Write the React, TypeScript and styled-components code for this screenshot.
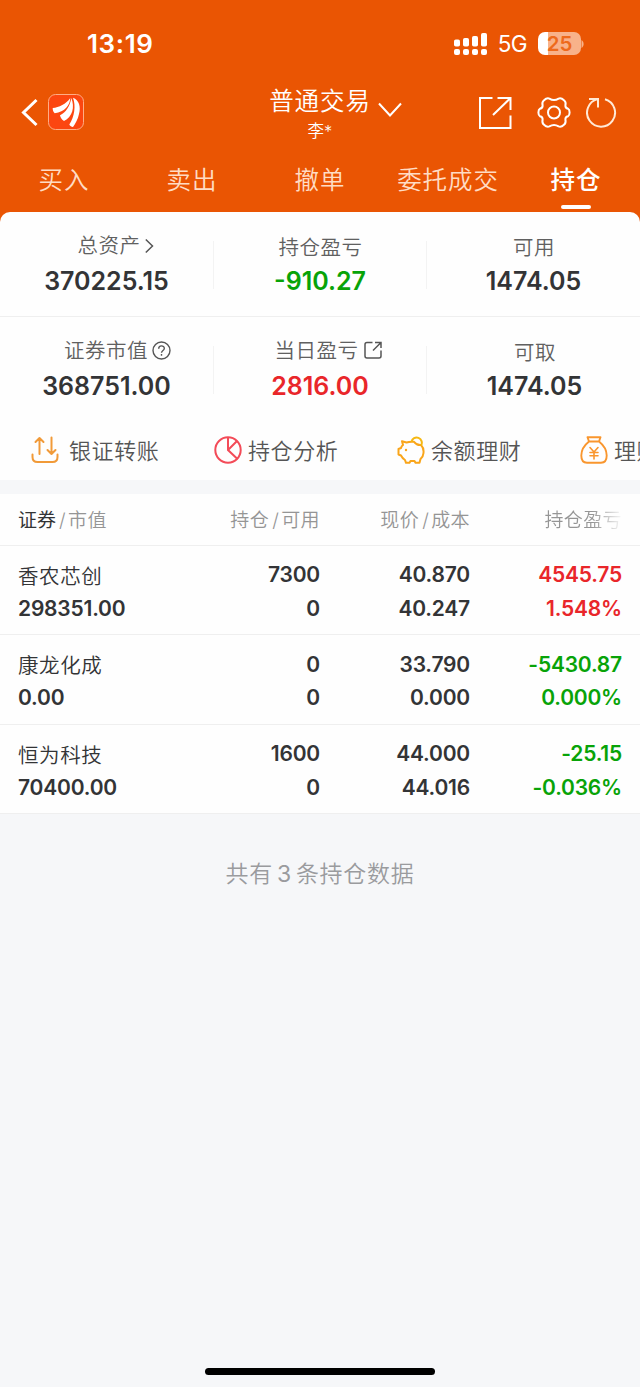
import React from "react";
import styled, { createGlobalStyle } from "styled-components";

const ORANGE = "#ea5503";
const RED = "#e9262a";
const GREEN = "#08a308";
const INK = "#333436";

const GlobalStyle = createGlobalStyle`
  *, *::before, *::after { box-sizing: border-box; }
  body {
    margin: 0;
    background: #f6f7f9;
    font-family: Inter, "Noto Sans CJK SC", sans-serif;
    color: ${INK};
    overflow: hidden;
  }
`;

const Screen = styled.div`
  width: 640px;
  height: 1387px;
  display: flex;
  flex-direction: column;
  background: #f6f7f9;
  overflow: hidden;
`;

const Header = styled.header`
  height: 222px;
  margin-bottom: -10px;
  flex: none;
  background: ${ORANGE};
  color: #fff;
`;

const StatusBar = styled.div`
  height: 88px;
  padding: 0 56px 0 87px;
  display: flex;
  align-items: center;
  justify-content: space-between;
`;

const Clock = styled.span`
  font-size: 26px;
  font-weight: 600;
  line-height: 30px;
  letter-spacing: 0.6px;
`;

const StatusIcons = styled.div`
  display: flex;
  align-items: center;
`;

const Network = styled.span`
  margin: 0 11px 0 10px;
  font-size: 22.5px;
  line-height: 26px;
  letter-spacing: -0.6px;
`;

const Battery = styled.div`
  width: 43px;
  height: 23px;
  border-radius: 7px;
  margin-top: -2px;
  background: linear-gradient(90deg, #fff 10px, #f8b28a 10px);
  color: #ee6a1c;
  font-size: 20.5px;
  font-weight: 600;
  line-height: 23.5px;
  text-align: center;
`;

const NavBar = styled.div`
  height: 62px;
  padding: 0 23px 0 21px;
  display: grid;
  grid-template-columns: 150px 1fr 140px;
`;

const NavLeft = styled.div`
  display: flex;
  gap: 9px;
  padding-top: 6px;
`;

const NavTitle = styled.div`
  display: flex;
  justify-content: center;
  padding-left: 23px;
`;

const TitleStack = styled.div`
  display: flex;
  flex-direction: column;
  align-items: center;
`;

const Title = styled.div`
  font-size: 24.5px;
  font-weight: 350;
  line-height: 27px;
  letter-spacing: 0.9px;
  white-space: nowrap;
`;

const Subtitle = styled.div`
  font-size: 16.5px;
  font-weight: 350;
  line-height: 20px;
  margin-top: 6px;
`;

const TitleArrow = styled.svg`
  margin: 14px 0 0 7px;
`;

const NavRight = styled.div`
  display: flex;
  justify-content: flex-end;
  padding-top: 6px;
`;

const ShareAction = styled.svg`
  margin-right: 25px;
`;

const GearAction = styled.svg`
  margin-right: 15px;
`;

const Tabs = styled.nav`
  display: grid;
  grid-template-columns: repeat(5, 128px);
  height: 62px;
`;

const Tab = styled.div<{ $active?: boolean }>`
  display: flex;
  flex-direction: column;
  align-items: center;
  padding-top: 15px;
  font-size: 24.5px;
  line-height: 30px;
  letter-spacing: 0.9px;
  font-weight: ${(p) => (p.$active ? 500 : 350)};
  color: ${(p) => (p.$active ? "#fff" : "#ffdcc4")};

  &::after {
    content: "";
    display: ${(p) => (p.$active ? "block" : "none")};
    width: 30px;
    height: 4px;
    margin-top: 10px;
    border-radius: 2px;
    background: #fff;
  }
`;

const Card = styled.section`
  flex: none;
  height: 268px;
  background: #fefefe;
  border-radius: 10px 10px 0 0;
  position: relative;
`;

const StatRow = styled.div<{ $line?: boolean }>`
  height: ${(p) => (p.$line ? "105px" : "103px")};
  display: grid;
  grid-template-columns: 214px 213px 213px;
  border-bottom: ${(p) => (p.$line ? "1px solid #efefef" : "0")};
`;

const Stat = styled.div<{ $shift?: number }>`
  display: flex;
  flex-direction: column;
  align-items: center;
  padding: 21px 0 0 ${(p) => p.$shift ?? 0}px;
  background: linear-gradient(#f3f3f3, #f3f3f3) right 29px / 1px 48px no-repeat;
  &:last-child { background: none; }
`;

const StatLabel = styled.div<{ $shift?: number; $drop?: number; $gap?: number }>`
  display: flex;
  align-items: center;
  height: 26px;
  gap: ${(p) => p.$gap ?? 4}px;
  padding: ${(p) => p.$drop ?? 0}px 0 0 ${(p) => p.$shift ?? 0}px;
  font-size: 20.5px;
  font-weight: 350;
  line-height: 26px;
  letter-spacing: 0.5px;
  color: #606060;
`;

const StatValue = styled.div<{ $color?: string }>`
  margin-top: 7px;
  margin-right: 1px;
  font-size: 25px;
  line-height: 30px;
  font-weight: 600;
  color: ${(p) => p.$color ?? INK};
`;

const Shortcuts = styled.div`
  display: grid;
  grid-template-columns: repeat(4, 183px);
  height: 60px;
  padding-left: 31px;
  overflow: hidden;
`;

const Shortcut = styled.div<{ $gap: number }>`
  height: 58px;
  display: flex;
  align-items: center;
  gap: ${(p) => p.$gap}px;
  font-size: 22px;
  font-weight: 350;
  letter-spacing: 0.6px;
  color: #555;
  white-space: nowrap;

  svg { margin-top: 2px; }
`;

const Table = styled.section`
  margin-top: 14px;
  background: #fefefe;
`;

const Row = styled.div`
  display: grid;
  grid-template-columns: 152px 150px 150px 152px;
  padding: 0 18px;
  border-bottom: 1px solid #efefef;
`;

const HeadRow = styled(Row)`
  height: 52px;
  padding-top: 2px;
  align-items: center;
  font-size: 19px;
  letter-spacing: 0.4px;
  font-weight: 350;
  color: #959595;
  line-height: 26px;
`;

const HeadCell = styled.div<{ $right?: boolean; $fade?: boolean }>`
  text-align: ${(p) => (p.$right ? "right" : "left")};
  white-space: nowrap;
  ${(p) =>
    p.$fade &&
    `background: linear-gradient(90deg, #959595 122px, #fefefe 154px);
     background-clip: text;
     color: transparent;`}
`;

const HeadStrong = styled.span`
  font-weight: 400;
  letter-spacing: 0;
  color: ${INK};
`;

const Slash = styled.span`
  margin: 0 2px 0 3px;
`;

const DataRow = styled(Row)`
  height: 89.33px;
  padding-top: 12.4px;
`;

const Cell = styled.div<{ $right?: boolean; $color?: string }>`
  display: flex;
  flex-direction: column;
  align-items: ${(p) => (p.$right ? "flex-end" : "flex-start")};
  color: ${(p) => p.$color ?? INK};
`;

const Num = styled.div`
  font-size: 21px;
  font-weight: 600;
  line-height: 33.5px;
  letter-spacing: -0.2px;
`;

const Name = styled.div`
  height: 33.5px;
  padding-top: 1.5px;
  font-size: 20.5px;
  font-weight: 350;
  letter-spacing: 0.6px;
  line-height: 33.5px;
`;

const Footer = styled.div`
  margin-top: 45px;
  text-align: center;
  font-size: 23px;
  font-weight: 350;
  line-height: 30px;
  letter-spacing: 0.7px;
  color: #9a9b9e;
`;

const Count = styled.span`
  margin: 0 4px;
  font-weight: 400;
`;

const HomeBar = styled.div`
  width: 230px;
  height: 7px;
  margin: auto auto 12px;
  border-radius: 4px;
  background: #000;
`;

const BackIcon = () => (
  <svg width="18" height="36" viewBox="0 0 18 36" fill="none" stroke="#fff" strokeWidth="3">
    <path d="M15.500 6 2.500 18.500 15.500 31" />
  </svg>
);

const Logo = () => (
  <svg width="36" height="36" viewBox="0 0 36 36">
    <rect x=".5" y=".5" width="35" height="35" rx="7" fill="#fc4610" stroke="#ffad85" />
    <g fill="#fff">
      <path d="M4.700 14C11 13.500 18 10 22.300 4 22 11 17 18 6.700 19.300 5 17.500 4.700 16 4.700 14Z" />
      <path d="M12 21.300C18 18.500 22 12 23.300 4 27 13 24.500 23 16 27 13.500 25.500 12.300 23 12 21.300Z" />
      <path d="M21.300 30.500C26.500 23 28 12 25 3.800 31 6 33 13 31 20 30 25 27.500 29.500 25 33 23.500 32.800 22 32 21.300 30.500Z" />
    </g>
  </svg>
);

const TitleChevron = () => (
  <TitleArrow width="24" height="16" viewBox="0 0 24 16" fill="none" stroke="#fff" strokeWidth="2">
    <path d="M1 1.500 12 13.500 23 1.500" />
  </TitleArrow>
);

const Signal = () => (
  <svg width="34" height="24" viewBox="0 0 34 24" fill="#fff">
    {[7.5, 6, 4, 1].map((top, i) => (
      <g key={i}>
        <rect x={i * 9} y={top} width="6" height={14.5 - top} rx="1.800" />
        <rect x={i * 9} y="17" width="6" height="6" rx="2" />
      </g>
    ))}
  </svg>
);

const BatteryTip = () => (
  <svg width="3" height="8" viewBox="0 0 3 8" fill="#f8b28a">
    <path d="M0.500 0C3.300 1.500 3.300 6.500 .5 8Z" />
  </svg>
);

const NavActions = () => (
  <>
    <ShareAction width="34" height="36" viewBox="0 0 34 36" fill="none" stroke="#fff" strokeWidth="2">
      <path d="M14.500 4H2V34H32.500V21.500M19.500 4H32.500V16M32 4.500 15 21" />
    </ShareAction>
    <GearAction width="34" height="36" viewBox="0 0 34 36" fill="none" stroke="#fff" strokeWidth="2" strokeLinejoin="round">
      <path d="M21.600 4.600Q24 3.400 27 6.200Q29.300 7.800 28.400 11.500Q28.200 14 31 14.700Q32.600 15.500 32.600 18.500Q32.600 21.500 31 22.300Q28.200 23 28.400 25.500Q29.300 29.200 27 30.800Q24 33.600 21.600 32.400Q17 29.500 12.400 32.400Q10 33.600 7 30.800Q4.700 29.200 5.600 25.500Q5.800 23 3 22.300Q1.400 21.500 1.400 18.500Q1.400 15.500 3 14.700Q5.800 14 5.600 11.500Q4.700 7.800 7 6.200Q10 3.400 12.400 4.600Q17 7.500 21.600 4.600Z" />
      <circle cx="17" cy="18.500" r="6" />
    </GearAction>
    <svg width="31" height="36" viewBox="0 0 31 36" fill="none" stroke="#ffe9d6" strokeWidth="2">
      <path d="M19 5.200A14 14 0 1 1 11.500 5.100M3 5H12V13.500" />
    </svg>
  </>
);

const RightChevron = () => (
  <svg width="9" height="16" viewBox="0 0 9 16" fill="none" stroke="#555" strokeWidth="1.500">
    <path d="M.8 1.500 7.500 8 .8 14.500" />
  </svg>
);

const HelpIcon = () => (
  <svg width="19" height="20" viewBox="0 0 19 20" fill="none" stroke="#555" strokeWidth="1.400">
    <circle cx="9.500" cy="9.500" r="8.500" />
    <path d="M6.700 7.700C6.700 4 12.300 4 12.300 7.500 12.300 9.500 9.500 9.500 9.500 11.800M9.500 13V14.700" />
  </svg>
);

const ShareIcon = () => (
  <svg width="18" height="20" viewBox="0 0 18 20" fill="none" stroke="#555" strokeWidth="1.500">
    <path d="M8.500 1.500H3Q1 1.500 1 3.500V15Q1 17 3 17H15Q17 17 17 15V9.500M11 1.500H17V7M16.500 2 9 9.500" />
  </svg>
);

const TransferIcon = () => (
  <svg width="28" height="28" viewBox="1 0 28 28" fill="none" stroke="#f19a38" strokeWidth="2" strokeLinecap="round" strokeLinejoin="round">
    <path d="M2.500 18.500V21Q2.500 26 7.500 26H22.500Q27.500 26 27.500 21V18.500M9.500 18V2M5.500 6 9.500 2 13.500 6M21.500 1.500V18M17.500 14 21.500 18 25.500 14" />
  </svg>
);

const PieIcon = () => (
  <svg width="28" height="28" viewBox="0 0 28 28" fill="none" stroke="#f34b58" strokeWidth="2">
    <circle cx="14" cy="14" r="12.700" />
    <path d="M14 1V14L23.500 23M14 14 23 5" />
  </svg>
);

const PiggyIcon = () => (
  <svg width="28" height="28" viewBox="0 0 28 28" fill="none" stroke="#f9a51a" strokeWidth="2" strokeLinejoin="round">
    <path d="M5 5.200 9.500 6.500Q13 5.300 17 5.800 20 9.500 24 9Q27 12 26.500 17 26.300 20.500 23.500 23L22.500 26.800H18.500L17.500 25H13.500L12.500 26.800H9L8 24Q5.500 22.500 4 19.500L1.500 18.500V13L4 12Q4.500 10 6 9Z" />
    <path d="M14.500 5.800A5.200 5.200 0 1 1 24 9.500" stroke="#f6b812" />
    <circle cx="9" cy="14" r="1.200" fill="#f9a51a" stroke="none" />
  </svg>
);

const MoneyBagIcon = () => (
  <svg width="28" height="28" viewBox="0 0 28 28" fill="none" stroke="#f9962e" strokeWidth="1.900" strokeLinejoin="round" strokeLinecap="round">
    <path d="M9 5.500 7.500 1.200H20.500L19 5.500ZM9 5.500C4 9.500 1.300 14 1.300 19.500 1.300 24.500 3 26.700 7 26.700H21C25 26.700 26.700 24.500 26.700 19.500 26.700 14 24 9.500 19 5.500" />
    <path d="M10 11.500 14 16 18 11.500M14 16V23M10 16.500H18M10 19.700H18" strokeWidth="1.600" />
  </svg>
);

const holdings = [
  { name: "香农芯创", value: "298351.00", qty: "7300", avail: "0", price: "40.870", cost: "40.247", pl: "4545.75", pct: "1.548%", color: RED },
  { name: "康龙化成", value: "0.00", qty: "0", avail: "0", price: "33.790", cost: "0.000", pl: "-5430.87", pct: "0.000%", color: GREEN },
  { name: "恒为科技", value: "70400.00", qty: "1600", avail: "0", price: "44.000", cost: "44.016", pl: "-25.15", pct: "-0.036%", color: GREEN },
];

export default function App() {
  return (
    <Screen>
      <GlobalStyle />
      <Header>
        <StatusBar>
          <Clock>13:19</Clock>
          <StatusIcons>
            <Signal />
            <Network>5G</Network>
            <Battery>25</Battery>
            <BatteryTip />
          </StatusIcons>
        </StatusBar>
        <NavBar>
          <NavLeft>
            <BackIcon />
            <Logo />
          </NavLeft>
          <NavTitle>
            <TitleStack>
              <Title>普通交易</Title>
              <Subtitle>李*</Subtitle>
            </TitleStack>
            <TitleChevron />
          </NavTitle>
          <NavRight>
            <NavActions />
          </NavRight>
        </NavBar>
        <Tabs>
          <Tab>买入</Tab>
          <Tab>卖出</Tab>
          <Tab>撤单</Tab>
          <Tab>委托成交</Tab>
          <Tab $active>持仓</Tab>
        </Tabs>
      </Header>
      <Card>
        <StatRow $line>
          <Stat>
            <StatLabel $shift={17}>总资产<RightChevron /></StatLabel>
            <StatValue>370225.15</StatValue>
          </Stat>
          <Stat>
            <StatLabel $drop={3}>持仓盈亏</StatLabel>
            <StatValue $color={GREEN}>-910.27</StatValue>
          </Stat>
          <Stat $shift={1}>
            <StatLabel $drop={3}>可用</StatLabel>
            <StatValue>1474.05</StatValue>
          </Stat>
        </StatRow>
        <StatRow>
          <Stat>
            <StatLabel $shift={21}>证券市值<HelpIcon /></StatLabel>
            <StatValue>368751.00</StatValue>
          </Stat>
          <Stat>
            <StatLabel $shift={15} $gap={5}>当日盈亏<ShareIcon /></StatLabel>
            <StatValue $color={RED}>2816.00</StatValue>
          </Stat>
          <Stat $shift={3}>
            <StatLabel $drop={3}>可取</StatLabel>
            <StatValue>1474.05</StatValue>
          </Stat>
        </StatRow>
        <Shortcuts>
          <Shortcut $gap={10}><TransferIcon />银证转账</Shortcut>
          <Shortcut $gap={6}><PieIcon />持仓分析</Shortcut>
          <Shortcut $gap={6}><PiggyIcon />余额理财</Shortcut>
          <Shortcut $gap={6}><MoneyBagIcon />理财</Shortcut>
        </Shortcuts>
      </Card>
      <Table>
        <HeadRow>
          <HeadCell><HeadStrong>证券</HeadStrong><Slash>/</Slash>市值</HeadCell>
          <HeadCell $right>持仓<Slash>/</Slash>可用</HeadCell>
          <HeadCell $right>现价<Slash>/</Slash>成本</HeadCell>
          <HeadCell $right $fade>持仓盈亏</HeadCell>
        </HeadRow>
        {holdings.map((h) => (
          <DataRow key={h.name}>
            <Cell><Name>{h.name}</Name><Num>{h.value}</Num></Cell>
            <Cell $right><Num>{h.qty}</Num><Num>{h.avail}</Num></Cell>
            <Cell $right><Num>{h.price}</Num><Num>{h.cost}</Num></Cell>
            <Cell $right $color={h.color}><Num>{h.pl}</Num><Num>{h.pct}</Num></Cell>
          </DataRow>
        ))}
      </Table>
      <Footer>共有<Count>3</Count>条持仓数据</Footer>
      <HomeBar />
    </Screen>
  );
}
